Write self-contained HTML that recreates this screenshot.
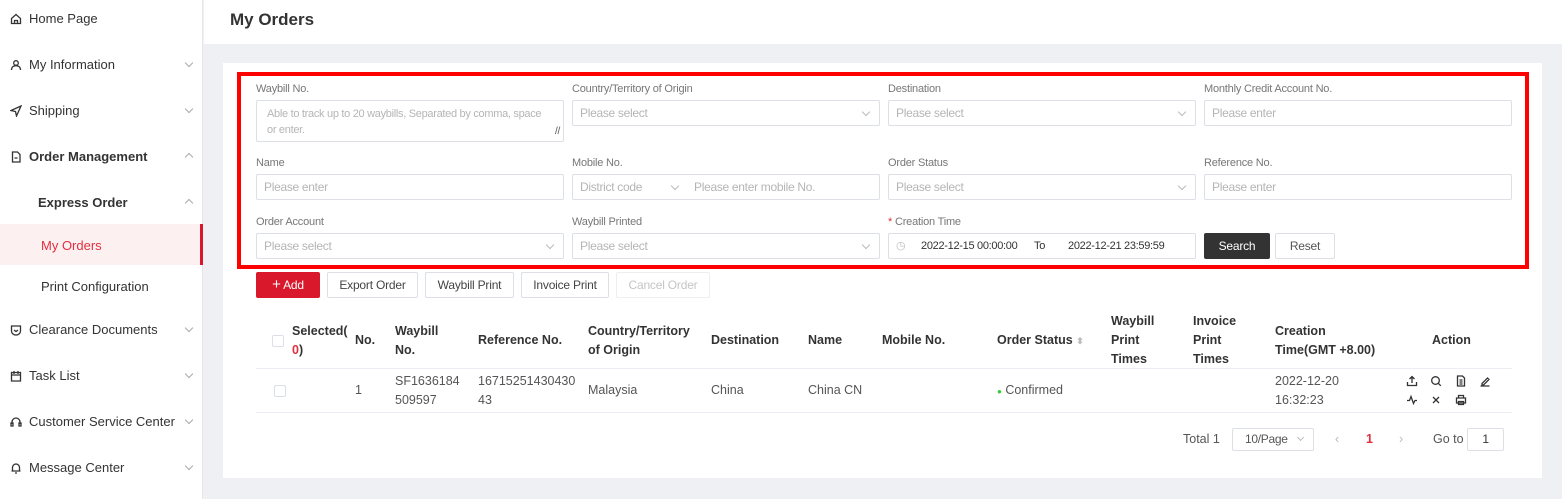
<!DOCTYPE html>
<html><head><meta charset="utf-8"><style>
*{box-sizing:border-box;margin:0;padding:0}
body{width:1562px;height:499px;background:#eef0f4;font-family:"Liberation Sans",sans-serif;position:relative;overflow:hidden;color:#333}
.a{position:absolute;white-space:nowrap}
#side{position:absolute;left:0;top:0;width:203px;height:499px;background:#fff;border-right:1px solid #e6e6e6}
.mi{position:absolute;left:29px;font-size:13px;color:#333}
.ic{position:absolute;left:10px;width:12px;height:12px}
.chev{position:absolute;left:186px;width:6px;height:6px;border-right:1px solid #aaa;border-bottom:1px solid #aaa;transform:rotate(45deg)}
.chev.up{transform:rotate(225deg)}
.lbl{position:absolute;font-size:11px;color:#777;letter-spacing:-.2px}
.inp{position:absolute;border:1px solid #dcdfe6;border-radius:2px;background:#fff;font-size:12px;color:#b5b5b5;padding-left:7px;letter-spacing:-.3px}
.sc{position:absolute;right:10px;top:8px;width:6px;height:6px;border-right:1px solid #bbb;border-bottom:1px solid #bbb;transform:rotate(45deg)}
.btn{position:absolute;border:1px solid #dcdfe6;border-radius:2px;background:#fff;font-size:12px;color:#444;text-align:center;height:26px;line-height:24px;letter-spacing:-.2px}
.th{position:absolute;font-size:12.5px;font-weight:bold;color:#333;line-height:19px}
.td{position:absolute;font-size:12.5px;color:#555;line-height:19px}
.cb{position:absolute;width:12px;height:12px;border:1px solid #dcdfe6;border-radius:2px;background:#fff}
svg{position:absolute;fill:none;stroke:#333;stroke-width:1.3}
</style></head><body>
<div id="side">
<svg class="ic" style="top:13px" viewBox="0 0 12 12"><path d="M1.5 5.5L6 1.5l4.5 4v5h-9z M4.5 10.5v-3h3v3"/></svg>
<div class="mi" style="top:11px">Home Page</div>
<svg class="ic" style="top:59px" viewBox="0 0 12 12"><circle cx="6" cy="4" r="2.3"/><path d="M1.5 11c0-3 2-4.3 4.5-4.3s4.5 1.3 4.5 4.3"/></svg>
<div class="mi" style="top:57px">My Information</div><div class="chev" style="top:60px"></div>
<svg class="ic" style="top:105px" viewBox="0 0 12 12"><path d="M11 1L1 5.5l4.5 1 1 4.5z"/></svg>
<div class="mi" style="top:103px">Shipping</div><div class="chev" style="top:106px"></div>
<svg class="ic" style="top:151px" viewBox="0 0 12 12"><path d="M2.5 1h5l2.5 2.5V11h-7.5z M4.5 7h3"/></svg>
<div class="mi" style="top:149px;font-weight:bold">Order Management</div><div class="chev up" style="top:154px"></div>
<div class="mi" style="top:195px;left:38px;font-weight:bold">Express Order</div><div class="chev up" style="top:200px"></div>
<div class="a" style="left:0;top:224px;width:203px;height:41px;background:#fdf0f1;border-right:3px solid #d9192b"></div>
<div class="mi" style="top:238px;left:41px;color:#e0303f">My Orders</div>
<div class="mi" style="top:279px;left:41px">Print Configuration</div>
<svg class="ic" style="top:324px" viewBox="0 0 12 12"><path d="M1.5 2h9v5a4.5 4 0 0 1-9 0z M4 6l2 1.5L8 6"/></svg>
<div class="mi" style="top:322px">Clearance Documents</div><div class="chev" style="top:325px"></div>
<svg class="ic" style="top:370px" viewBox="0 0 12 12"><path d="M1.5 2.5h9v8.5h-9z M1.5 5h9 M4 1v3 M8 1v3"/></svg>
<div class="mi" style="top:368px">Task List</div><div class="chev" style="top:371px"></div>
<svg class="ic" style="top:416px" viewBox="0 0 12 12"><path d="M2 8V6a4 4 0 0 1 8 0v2 M1 7h2v3H1z M9 7h2v3H9z"/></svg>
<div class="mi" style="top:414px">Customer Service Center</div><div class="chev" style="top:417px"></div>
<svg class="ic" style="top:462px" viewBox="0 0 12 12"><path d="M2.5 9V5.5a3.5 3.5 0 0 1 7 0V9z M1.5 9h9 M5 11h2"/></svg>
<div class="mi" style="top:460px">Message Center</div><div class="chev" style="top:463px"></div>
</div>
<div class="a" style="left:204px;top:0;width:1358px;height:44px;background:#fff"></div>
<div class="a" style="left:230px;top:10px;font-size:17px;font-weight:bold;color:#333">My Orders</div>
<div class="a" style="left:223px;top:63px;width:1319px;height:415px;background:#fff"></div>
<div class="a" style="left:237px;top:72px;width:1292px;height:197px;border:4px solid #f00"></div>

<div class="lbl" style="left:256px;top:83px">Waybill No.</div>
<div class="lbl" style="left:572px;top:83px">Country/Territory of Origin</div>
<div class="lbl" style="left:888px;top:83px">Destination</div>
<div class="lbl" style="left:1204px;top:83px">Monthly Credit Account No.</div>
<div class="inp" style="left:256px;top:100px;width:308px;height:42px;padding:5px 10px;font-size:11px;line-height:16px;white-space:normal">Able to track up to 20 waybills, Separated by comma, space or enter.<span class="a" style="right:3px;bottom:1px;color:#555;font-size:10px">//</span></div>
<div class="inp" style="left:572px;top:100px;width:308px;height:26px;line-height:24px">Please select<i class="sc"></i></div>
<div class="inp" style="left:888px;top:100px;width:308px;height:26px;line-height:24px">Please select<i class="sc"></i></div>
<div class="inp" style="left:1204px;top:100px;width:308px;height:26px;line-height:24px">Please enter</div>

<div class="lbl" style="left:256px;top:157px">Name</div>
<div class="lbl" style="left:572px;top:157px">Mobile No.</div>
<div class="lbl" style="left:888px;top:157px">Order Status</div>
<div class="lbl" style="left:1204px;top:157px">Reference No.</div>
<div class="inp" style="left:256px;top:174px;width:308px;height:26px;line-height:24px">Please enter</div>
<div class="inp" style="left:572px;top:174px;width:308px;height:26px;line-height:24px">District code<i class="sc" style="right:auto;left:99px"></i><span class="a" style="left:121px">Please enter mobile No.</span></div>
<div class="inp" style="left:888px;top:174px;width:308px;height:26px;line-height:24px">Please select<i class="sc"></i></div>
<div class="inp" style="left:1204px;top:174px;width:308px;height:26px;line-height:24px">Please enter</div>

<div class="lbl" style="left:256px;top:216px">Order Account</div>
<div class="lbl" style="left:572px;top:216px">Waybill Printed</div>
<div class="lbl" style="left:888px;top:216px"><span style="color:#e0303f">*</span> Creation Time</div>
<div class="inp" style="left:256px;top:233px;width:308px;height:26px;line-height:24px">Please select<i class="sc"></i></div>
<div class="inp" style="left:572px;top:233px;width:308px;height:26px;line-height:24px">Please select<i class="sc"></i></div>
<div class="inp" style="left:888px;top:233px;width:308px;height:26px;line-height:24px;color:#333;font-size:11px"><span style="color:#bbb">◷</span><span class="a" style="left:32px">2022-12-15 00:00:00</span><span class="a" style="left:145px">To</span><span class="a" style="left:179px">2022-12-21 23:59:59</span></div>
<div class="btn" style="left:1204px;top:233px;width:66px;background:#333;color:#fff;border-color:#333">Search</div>
<div class="btn" style="left:1275px;top:233px;width:60px;color:#555">Reset</div>

<div class="btn" style="left:256px;top:272px;width:64px;background:#d9192b;color:#fff;border-color:#d9192b"><b style="font-weight:normal;font-size:15px">+</b> Add</div>
<div class="btn" style="left:327px;top:272px;width:91px">Export Order</div>
<div class="btn" style="left:425px;top:272px;width:89px">Waybill Print</div>
<div class="btn" style="left:521px;top:272px;width:88px">Invoice Print</div>
<div class="btn" style="left:616px;top:272px;width:94px;color:#c5c5c5;border-color:#eee">Cancel Order</div>

<div class="cb" style="left:272px;top:335px"></div>
<div class="th" style="left:292px;top:322px">Selected(<br><span style="color:#e0303f">0</span>)</div>
<div class="th" style="left:355px;top:331px">No.</div>
<div class="th" style="left:395px;top:322px">Waybill<br>No.</div>
<div class="th" style="left:478px;top:331px">Reference No.</div>
<div class="th" style="left:588px;top:322px">Country/Territory<br>of Origin</div>
<div class="th" style="left:711px;top:331px">Destination</div>
<div class="th" style="left:808px;top:331px">Name</div>
<div class="th" style="left:882px;top:331px">Mobile No.</div>
<div class="th" style="left:997px;top:331px">Order Status <span style="color:#bbb;font-size:9px">⬍</span></div>
<div class="th" style="left:1111px;top:312px">Waybill<br>Print<br>Times</div>
<div class="th" style="left:1193px;top:312px">Invoice<br>Print<br>Times</div>
<div class="th" style="left:1275px;top:322px">Creation<br>Time(GMT +8.00)</div>
<div class="th" style="left:1432px;top:331px">Action</div>
<div class="a" style="left:256px;top:368px;width:1256px;height:1px;background:#ebeef5"></div>
<div class="cb" style="left:274px;top:385px"></div>
<div class="td" style="left:355px;top:381px">1</div>
<div class="td" style="left:395px;top:372px">SF1636184<br>509597</div>
<div class="td" style="left:478px;top:372px">16715251430430<br>43</div>
<div class="td" style="left:588px;top:381px">Malaysia</div>
<div class="td" style="left:711px;top:381px">China</div>
<div class="td" style="left:808px;top:381px">China CN</div>
<div class="td" style="left:997px;top:381px"><span style="color:#3c3;font-size:8px">●</span> Confirmed</div>
<div class="td" style="left:1275px;top:372px">2022-12-20<br>16:32:23</div>
<svg style="left:1406px;top:375px" width="12" height="12" viewBox="0 0 12 12"><path d="M6 8V1.5 M3.5 4L6 1.5 8.5 4 M1.5 7v3.5h9V7"/></svg>
<svg style="left:1430px;top:375px" width="12" height="12" viewBox="0 0 12 12"><circle cx="5.5" cy="5.5" r="3.8"/><path d="M8.3 8.3l2.5 2.5"/></svg>
<svg style="left:1455px;top:375px" width="12" height="12" viewBox="0 0 12 12"><path d="M2.5 1h5l2 2v8h-7z M4.5 5h3 M4.5 7h3 M4.5 9h3"/></svg>
<svg style="left:1479px;top:375px" width="12" height="12" viewBox="0 0 12 12"><path d="M3 8.5l5.5-5.5 1.5 1.5L4.5 10H3z M1.5 11h9"/></svg>
<svg style="left:1406px;top:394px" width="12" height="12" viewBox="0 0 12 12"><path d="M1 6.5h2.5l1.5-4 2.5 7 1.5-3h2"/></svg>
<svg style="left:1430px;top:394px" width="12" height="12" viewBox="0 0 12 12" style="stroke-width:1.6"><path d="M3 3l6 6 M9 3l-6 6"/></svg>
<svg style="left:1455px;top:394px" width="12" height="12" viewBox="0 0 12 12"><path d="M3.5 4V1.5h5V4 M1.5 4h9v5h-9z M3.5 7.5h5v3h-5z"/></svg>
<div class="a" style="left:256px;top:412px;width:1256px;height:1px;background:#ebeef5"></div>

<div class="td" style="left:1183px;top:430px;font-size:12.5px">Total 1</div>
<div class="inp" style="left:1232px;top:428px;width:82px;height:23px;line-height:21px;color:#555;padding-left:12px">10/Page<i class="sc" style="top:6px;width:5px;height:5px"></i></div>
<div class="td" style="left:1335px;top:430px;color:#bbb">‹</div>
<div class="td" style="left:1366px;top:430px;color:#e0303f;font-weight:bold">1</div>
<div class="td" style="left:1399px;top:430px;color:#bbb">›</div>
<div class="td" style="left:1433px;top:430px">Go to</div>
<div class="inp" style="left:1467px;top:428px;width:37px;height:23px;line-height:21px;color:#333;text-align:center;padding:0">1</div>
</body></html>
